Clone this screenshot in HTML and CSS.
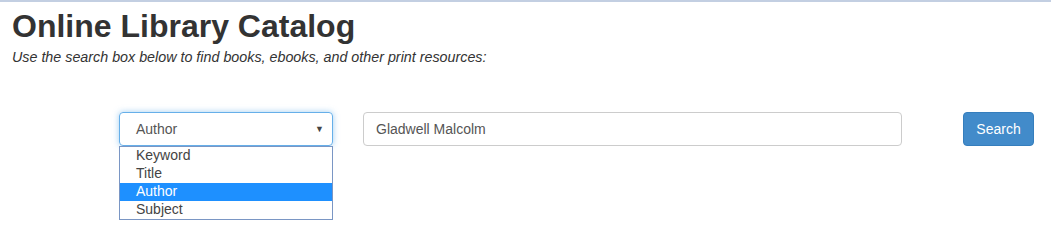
FILE: index.html
```html
<!DOCTYPE html>
<html lang="en">

<head>
  <meta charset="UTF-8">
  <meta name="viewport" content="width=device-width, initial-scale=1.0">
  <title>Online Library Catalog</title>
  <link rel="stylesheet" href="styles.css">
</head>

<body>
  <div class="page">
    <h1 class="title">Online Library Catalog</h1>
    <p class="intro">Use the search box below to find books, ebooks, and other print resources:</p>

    <div class="search-row">
      <div class="select-wrap">
        <div class="select">
          <span>Author</span>
          <span class="caret">&#9660;</span>
        </div>
        <div class="menu">
          <div class="item">Keyword</div>
          <div class="item">Title</div>
          <div class="item item-active">Author</div>
          <div class="item">Subject</div>
        </div>
      </div>
      <div class="query">Gladwell Malcolm</div>
      <button type="button" class="btn">Search</button>
    </div>
  </div>
</body>

</html>
```

FILE: styles.css
```css
* {
  box-sizing: border-box;
}

body {
  margin: 0;
  font-family: "Liberation Sans", Arial, sans-serif;
  font-size: 14px;
  color: #333;
  background: #fff;
  border-top: 2px solid #c3cfe2;
}

.page {
  padding: 0 12px;
}

.title {
  margin: 4px 0 0 0;
  font-size: 32px;
  line-height: 40px;
  font-weight: bold;
  color: #333;
}

.intro {
  margin: 1px 0 0 0;
  font-size: 14.3px;
  line-height: 20px;
  font-style: italic;
}

.search-row {
  display: flex;
  align-items: flex-start;
  margin: 45px 0 0 107px;
}

.select-wrap {
  width: 214px;
}

.select {
  display: flex;
  justify-content: space-between;
  align-items: center;
  height: 34px;
  padding: 0 8px 0 16px;
  border: 1px solid #66afe9;
  border-radius: 4px;
  box-shadow: 0 0 6px rgba(102, 175, 233, 0.6);
  color: #555;
}

.caret {
  font-size: 9px;
  color: #444;
}

.menu {
  width: 214px;
  background: #fff;
  border: 1px solid #7a96c4;
}

.item {
  height: 18px;
  line-height: 17px;
  padding-left: 16px;
  color: #444;
}

.item-active {
  background: #1e90ff;
  color: #fff;
}

.query {
  width: 539px;
  height: 34px;
  margin-left: 30px;
  padding: 0 12px;
  line-height: 32px;
  border: 1px solid #ccc;
  border-radius: 4px;
  color: #555;
}

.btn {
  width: 71px;
  height: 34px;
  margin-left: 61px;
  border: 1px solid #357ebd;
  border-radius: 4px;
  background: #428bca;
  color: #fff;
  font-family: inherit;
  font-size: 14px;
}
```
